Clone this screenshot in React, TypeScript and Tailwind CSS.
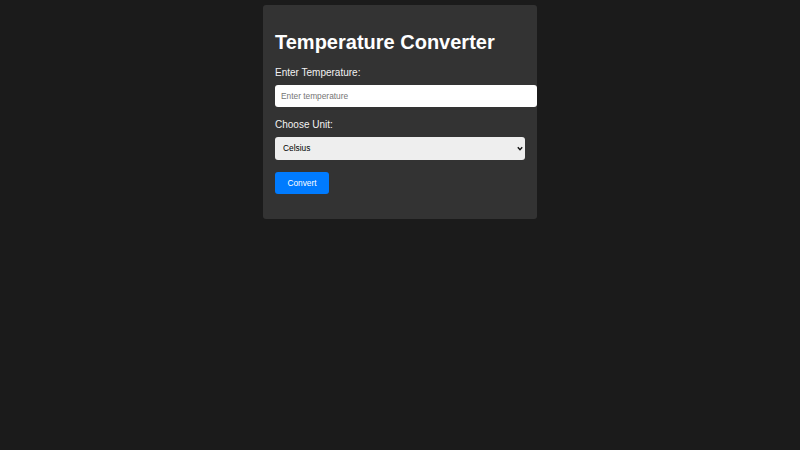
import React, { useState } from 'react';

export default function App() {
  const [temp, setTemp] = useState('');
  const [unit, setUnit] = useState('celsius');

  return (
    <div className="min-h-screen bg-[#1b1b1b] pt-[5px] font-['Liberation_Sans',Arial,sans-serif]">
      <div className="mx-auto w-[274px] rounded-[3px] bg-[#333333] px-[12px] pt-[12.5px] pb-[25px] text-white">
        <h1 className="mt-[13.5px] mb-[12.5px] text-[20px] leading-[23px] font-bold">Temperature Converter</h1>

        <label htmlFor="temp" className="block text-[10px] leading-[11.5px] text-[#f2f2f2]">
          Enter Temperature:
        </label>
        <input
          id="temp"
          type="number"
          value={temp}
          onChange={(e) => setTemp(e.target.value)}
          placeholder="Enter temperature"
          className="mt-[7px] block h-[22px] w-[262px] rounded-[3px] bg-white px-[6px] text-[8.33px] text-black placeholder:text-[#757575] outline-none"
        />

        <label htmlFor="unit" className="mt-[12px] block text-[10px] leading-[11.5px] text-[#f2f2f2]">
          Choose Unit:
        </label>
        <div className="relative mt-[6.5px] w-[250px]">
          <select
            id="unit"
            value={unit}
            onChange={(e) => setUnit(e.target.value)}
            className="block h-[23px] w-full appearance-none rounded-[3px] border-0 bg-[#eeeeee] px-[8px] text-[8.33px] text-black outline-none"
          >
            <option value="celsius">Celsius</option>
            <option value="fahrenheit">Fahrenheit</option>
            <option value="kelvin">Kelvin</option>
          </select>
          {/* small dropdown chevron */}
          <svg
            className="pointer-events-none absolute top-[9px] right-[2px]"
            width="6"
            height="5"
            viewBox="0 0 6 5"
          >
            <path d="M0.8 1.2 L3 3.6 L5.2 1.2" fill="none" stroke="#111" strokeWidth="1.4" />
          </svg>
        </div>

        <button
          type="button"
          className="mt-[12px] block h-[22px] w-[54px] rounded-[3px] bg-[#007bff] text-[8.33px] text-white"
        >
          Convert
        </button>
      </div>
    </div>
  );
}
